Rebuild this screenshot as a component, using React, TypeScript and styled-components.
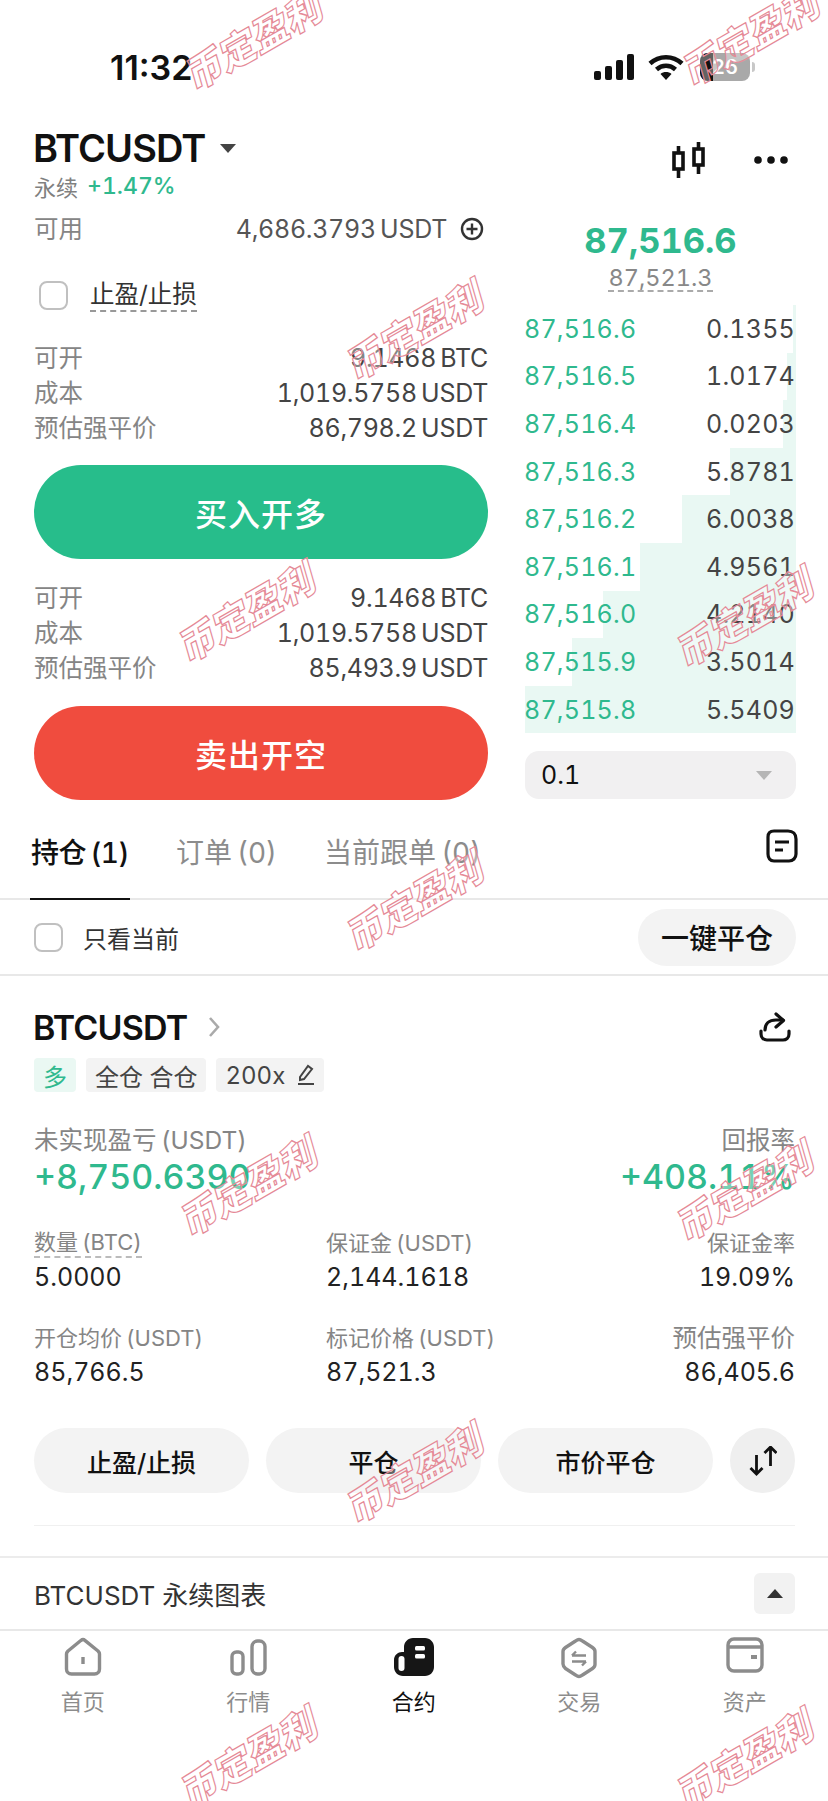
import React from 'react';
import styled, { createGlobalStyle } from 'styled-components';

const GlobalStyle = createGlobalStyle`
  html, body {
    margin: 0;
    padding: 0;
    background: #fff;
  }
  * {
    box-sizing: border-box;
  }
`;

const FONT = `Inter, "Noto Sans CJK SC", sans-serif`;
const GREEN = '#2fb98e';
const THIN = '\u2009';

const bookRows = [
  { price: '87,516.6', size: '0.1355', depth: 3 },
  { price: '87,516.5', size: '1.0174', depth: 9 },
  { price: '87,516.4', size: '0.0203', depth: 13 },
  { price: '87,516.3', size: '5.8781', depth: 66 },
  { price: '87,516.2', size: '6.0038', depth: 114 },
  { price: '87,516.1', size: '4.9561', depth: 156 },
  { price: '87,516.0', size: '4.2140', depth: 193 },
  { price: '87,515.9', size: '3.5014', depth: 224 },
  { price: '87,515.8', size: '5.5409', depth: 271 },
];

const marks = [
  [255, 40], [752, 36], [416, 330], [248, 612], [746, 617],
  [416, 901], [250, 1186], [746, 1191], [416, 1473], [250, 1757], [746, 1759],
];

const App = () => (
  <Page>
    <GlobalStyle />
    <StatusBar>
      <Clock>11:32</Clock>
      <StatusIcons>
        <svg width="40" height="26" viewBox="0 0 40 26" fill="#111">
          <rect x="0" y="17" width="7" height="9" rx="2" />
          <rect x="11" y="12" width="7" height="14" rx="2" />
          <rect x="22" y="6" width="7" height="20" rx="2" />
          <rect x="33" y="0" width="7" height="26" rx="2" />
        </svg>
        <svg width="36" height="26" viewBox="0 0 36 26" fill="none" stroke="#111" strokeWidth="4.5">
          <path d="M2 9.500C11 1 25 1 34 9.500" />
          <path d="M8.500 15.500C14 10.500 22 10.500 27.500 15.500" />
          <path d="M18 26l-5.500-6c3-2.600 8-2.600 11 0z" fill="#111" stroke="none" />
        </svg>
        <Battery>
          <BatteryLevel />
          <BatteryText>26</BatteryText>
        </Battery>
      </StatusIcons>
    </StatusBar>

    <TradeGrid>
      <LeftCol>
        <TitleRow>
          <Symbol>BTCUSDT</Symbol>
          <CaretDown />
        </TitleRow>
        <SubRow>
          <span>永续</span>
          <Change>+1.47%</Change>
        </SubRow>
        <AvailRow>
          <Muted>可用</Muted>
          <AvailValue>
            <span>4,686.3793{THIN}USDT</span>
            <svg width="24" height="24" viewBox="0 0 24 24" fill="none" stroke="#333" strokeWidth="2.400">
              <circle cx="12" cy="12" r="10" />
              <path d="M12 6.500v11M6.500 12h11" />
            </svg>
          </AvailValue>
        </AvailRow>
        <StopRow>
          <CheckBox />
          <StopLabel>止盈/止损</StopLabel>
        </StopRow>
        <InfoGroup $gap={25}>
          <InfoRow><Muted>可开</Muted><InfoValue>9.1468{THIN}BTC</InfoValue></InfoRow>
          <InfoRow><Muted>成本</Muted><InfoValue>1,019.5758{THIN}USDT</InfoValue></InfoRow>
          <InfoRow><Muted>预估强平价</Muted><InfoValue>86,798.2{THIN}USDT</InfoValue></InfoRow>
        </InfoGroup>
        <ActionButton $bg="#27bd8b">买入开多</ActionButton>
        <InfoGroup $gap={21}>
          <InfoRow><Muted>可开</Muted><InfoValue>9.1468{THIN}BTC</InfoValue></InfoRow>
          <InfoRow><Muted>成本</Muted><InfoValue>1,019.5758{THIN}USDT</InfoValue></InfoRow>
          <InfoRow><Muted>预估强平价</Muted><InfoValue>85,493.9{THIN}USDT</InfoValue></InfoRow>
        </InfoGroup>
        <ActionButton $bg="#f04c3e" $gap={21}>卖出开空</ActionButton>
      </LeftCol>

      <RightCol>
        <HeaderIcons>
          <svg width="34" height="36" viewBox="0 0 34 36" fill="none" stroke="#111" strokeWidth="3.600">
            <rect x="2" y="11" width="9" height="16" />
            <path d="M6.500 4v7M6.500 27v9" />
            <rect x="22" y="7" width="9" height="16" />
            <path d="M26.500 0v7M26.500 23v9" />
          </svg>
          <svg width="34" height="8" viewBox="0 0 34 8" fill="#111">
            <circle cx="4" cy="4" r="3.800" />
            <circle cx="17" cy="4" r="3.800" />
            <circle cx="30" cy="4" r="3.800" />
          </svg>
        </HeaderIcons>
        <LastPrice>87,516.6</LastPrice>
        <MarkWrap><MarkPrice>87,521.3</MarkPrice></MarkWrap>
        <Book>
          {bookRows.map((row) => (
            <BookRow key={row.price}>
              <DepthBar style={{ width: row.depth }} />
              <BookPrice>{row.price}</BookPrice>
              <BookSize>{row.size}</BookSize>
            </BookRow>
          ))}
        </Book>
        <StepSelect>
          0.1
          <SelectCaret />
        </StepSelect>
      </RightCol>
    </TradeGrid>

    <Tabs>
      <Tab $active>持仓{THIN}(1)</Tab>
      <Tab>订单{THIN}(0)</Tab>
      <Tab>当前跟单{THIN}(0)</Tab>
      <NoteIcon>
        <svg width="32" height="34" viewBox="0 0 32 34" fill="none" stroke="#111" strokeWidth="3.200">
          <path d="M8 2h14c5 0 8 3 8 8v15c0 4-3 7-7 7H8c-4 0-6-3-6-7V8c0-4 2-6 6-6z" />
          <path d="M9 13h14M9 21h8" />
        </svg>
      </NoteIcon>
    </Tabs>

    <FilterRow>
      <FilterLabel>
        <CheckBox />
        只看当前
      </FilterLabel>
      <CloseAll>一键平仓</CloseAll>
    </FilterRow>

    <PositionCard>
      <PositionHead>
        <PositionName>
          BTCUSDT
          <svg width="12" height="22" viewBox="0 0 12 22" fill="none" stroke="#aaa" strokeWidth="2.600">
            <path d="M2 2l8 9-8 9" />
          </svg>
        </PositionName>
        <svg width="32" height="30" viewBox="0 0 32 30" fill="none" stroke="#111" strokeWidth="3.200" strokeLinecap="round" strokeLinejoin="round">
          <path d="M2 19v3c0 4 3 6 6 6h16c3 0 6-2 6-6v-3" />
          <path d="M6 18c0-6 4-10 11-10h7" />
          <path d="M17 2l7.500 6.500L17 15" />
        </svg>
      </PositionHead>
      <Chips>
        <Chip $long>多</Chip>
        <Chip>全仓 合仓</Chip>
        <Chip>
          200x
          <svg width="18" height="22" viewBox="0 0 18 22" fill="none" stroke="#444" strokeWidth="2">
            <path d="M3 13L11 2l4 3-8 10-4 1z" />
            <path d="M1 20h16" />
          </svg>
        </Chip>
      </Chips>
      <PnlRow>
        <PnlCell>
          <Muted>未实现盈亏{THIN}(USDT)</Muted>
          <PnlValue>+8,750.6390</PnlValue>
        </PnlCell>
        <PnlCell $right>
          <Muted>回报率</Muted>
          <PnlValue>+408.11%</PnlValue>
        </PnlCell>
      </PnlRow>
      <StatGrid>
        <Stat><StatLabel $dashed>数量{THIN}(BTC)</StatLabel><StatValue>5.0000</StatValue></Stat>
        <Stat><StatLabel>保证金{THIN}(USDT)</StatLabel><StatValue>2,144.1618</StatValue></Stat>
        <Stat $right><StatLabel>保证金率</StatLabel><StatValue>19.09%</StatValue></Stat>
        <Stat><StatLabel>开仓均价{THIN}(USDT)</StatLabel><StatValue>85,766.5</StatValue></Stat>
        <Stat><StatLabel>标记价格{THIN}(USDT)</StatLabel><StatValue>87,521.3</StatValue></Stat>
        <Stat $right><StatLabel $large>预估强平价</StatLabel><StatValue>86,405.6</StatValue></Stat>
      </StatGrid>
      <PositionActions>
        <PillButton>止盈/止损</PillButton>
        <PillButton>平仓</PillButton>
        <PillButton>市价平仓</PillButton>
        <RoundButton>
          <svg width="28" height="30" viewBox="0 0 28 30" fill="none" stroke="#111" strokeWidth="2.800">
            <path d="M7.500 9v19M1.500 22l6 6 6-6" />
            <path d="M21.500 20V1M15.500 7l6-6 6 6" />
          </svg>
        </RoundButton>
      </PositionActions>
      <CardRule />
    </PositionCard>

    <ChartRow>
      <ChartTitle>BTCUSDT 永续图表</ChartTitle>
      <ChartToggle><CaretUp /></ChartToggle>
    </ChartRow>

    <BottomNav>
      <NavItem>
        <svg width="38" height="40" viewBox="0 0 38 40" fill="none" stroke="#8c8c8c" strokeWidth="3.400" strokeLinejoin="round">
          <path d="M19 2.500c1 0 1.500.5 2.500 1.300L34 14c1 1 1.500 1.800 1.500 3v15c0 3-2 5-5 5h-23c-3 0-5-2-5-5V17c0-1.200.5-2 1.500-3L16.500 3.800c1-.8 1.500-1.300 2.500-1.300z" />
          <path d="M19 20v7" />
        </svg>
        <NavLabel>首页</NavLabel>
      </NavItem>
      <NavItem>
        <svg width="38" height="40" viewBox="0 0 38 40" fill="none" stroke="#8c8c8c" strokeWidth="3.400">
          <rect x="3" y="15" width="11" height="22" rx="4.500" />
          <rect x="23" y="4" width="13" height="33" rx="5.500" />
        </svg>
        <NavLabel>行情</NavLabel>
      </NavItem>
      <NavItem>
        <svg width="40" height="40" viewBox="0 0 40 40" fill="#161616">
          <path d="M10 10c0-5 4-9 9-9h12c5 0 9 4 9 9v20c0 5-4 9-9 9H9c-5 0-9-4-9-9V23c0-5 4-8 8-8h2z" />
          <rect x="21" y="9" width="10" height="4.500" rx="1.500" fill="#fff" />
          <rect x="21" y="17" width="10" height="4.500" rx="1.500" fill="#fff" />
          <rect x="4.500" y="19" width="6" height="15" rx="3" fill="#fff" />
        </svg>
        <NavLabel $active>合约</NavLabel>
      </NavItem>
      <NavItem>
        <svg width="38" height="42" viewBox="0 0 38 42" fill="none" stroke="#8c8c8c" strokeWidth="3.400" strokeLinejoin="round">
          <path d="M19 2.500c1.500 0 2.500.8 3.500 1.500l10 6.500c1.500 1 2.500 2.200 2.500 4v13c0 1.800-1 3-2.500 4l-10 6.500c-1 .7-2 1.500-3.500 1.500s-2.500-.8-3.500-1.500l-10-6.500C4 30 3 28.800 3 27V14.500c0-1.800 1-3 2.500-4l10-6.500c1-.7 2-1.500 3.500-1.500z" />
          <path d="M12 18.500h14M12 18.500l4-4M26 24.500H12M26 24.500l-4 4" strokeWidth="2.400" />
        </svg>
        <NavLabel>交易</NavLabel>
      </NavItem>
      <NavItem>
        <svg width="38" height="36" viewBox="0 0 38 36" fill="none" stroke="#8c8c8c" strokeWidth="3.400">
          <rect x="2" y="2" width="34" height="32" rx="6" />
          <path d="M2 10h34" />
          <rect x="25" y="18" width="6" height="4" fill="#8c8c8c" stroke="none" />
        </svg>
        <NavLabel>资产</NavLabel>
      </NavItem>
    </BottomNav>

    {marks.map(([x, y]) => (
      <Watermark key={`${x}-${y}`} style={{ left: x, top: y }}>币定盈利</Watermark>
    ))}
  </Page>
);

export default App;

const Page = styled.div`
  position: relative;
  width: 828px;
  height: 1801px;
  overflow: hidden;
  background: #fff;
  font-family: ${FONT};
  font-variant-numeric: tabular-nums;
  color: #111;
`;

const Watermark = styled.div`
  position: absolute;
  transform: translate(-50%, -50%) rotate(-30deg) skewX(-14deg);
  font-size: 38px;
  font-weight: 900;
  line-height: 1;
  white-space: nowrap;
  color: rgba(255, 255, 255, 0.35);
  -webkit-text-stroke: 1.2px #e58a97;
  pointer-events: none;
`;

const StatusBar = styled.div`
  height: 120px;
  padding: 53px 78px 0 110px;
  display: flex;
  justify-content: space-between;
  align-items: flex-start;
`;

const Clock = styled.div`
  font-size: 34px;
  line-height: 30px;
  font-weight: 600;
  font-variant-numeric: normal;
`;

const StatusIcons = styled.div`
  display: flex;
  align-items: center;
  gap: 14px;
  height: 28px;
`;

const Battery = styled.div`
  position: relative;
  width: 50px;
  height: 28px;
  margin-left: 2px;
  border-radius: 8px;
  background: #a9a9a9;
  &::after {
    content: '';
    position: absolute;
    right: -5px;
    top: 9px;
    width: 3px;
    height: 10px;
    border-radius: 0 3px 3px 0;
    background: #c8c8c8;
  }
`;

const BatteryLevel = styled.div`
  width: 13px;
  height: 100%;
  border-radius: 8px 0 0 8px;
  background: #111;
`;

const BatteryText = styled.span`
  position: absolute;
  left: 12px;
  top: 2px;
  font-size: 20px;
  line-height: 24px;
  font-weight: 600;
  color: #fff;
`;

const TradeGrid = styled.div`
  display: grid;
  grid-template-columns: 454px 271px;
  column-gap: 37px;
  padding-left: 34px;
  height: 680px;
`;

const LeftCol = styled.div`
  display: flex;
  flex-direction: column;
`;

const RightCol = styled.div`
  display: flex;
  flex-direction: column;
`;

const TitleRow = styled.div`
  height: 56px;
  display: flex;
  align-items: center;
  gap: 14px;
`;

const Symbol = styled.div`
  margin-left: -1px;
  font-size: 38px;
  font-weight: 600;
  letter-spacing: -0.9px;
  font-variant-numeric: normal;
`;

const CaretDown = styled.span`
  width: 0;
  height: 0;
  border-left: 8px solid transparent;
  border-right: 8px solid transparent;
  border-top: 9px solid #444;
`;

const SubRow = styled.div`
  height: 20px;
  display: flex;
  align-items: center;
  gap: 9px;
  font-size: 22px;
  color: #808080;
`;

const Change = styled.span`
  font-size: 23px;
  font-weight: 500;
  color: ${GREEN};
`;

const Muted = styled.span`
  font-size: 24.5px;
  line-height: 30px;
  color: #858585;
`;

const AvailRow = styled.div`
  margin-top: 16px;
  height: 34px;
  display: flex;
  justify-content: space-between;
  align-items: center;
  padding-right: 4px;
`;

const AvailValue = styled.span`
  display: flex;
  align-items: center;
  gap: 13px;
  font-size: 25px;
  letter-spacing: -0.3px;
  color: #555;
`;

const StopRow = styled.div`
  margin-top: 29px;
  height: 40px;
  display: flex;
  align-items: center;
  gap: 22px;
`;

const CheckBox = styled.span`
  display: inline-block;
  width: 29px;
  height: 29px;
  margin-left: 5px;
  border: 2px solid #c0c0c0;
  border-radius: 8px;
  flex: none;
`;

const StopLabel = styled.span`
  font-size: 24.5px;
  line-height: 32px;
  color: #333;
  border-bottom: 2px dashed #999;
`;

const InfoGroup = styled.div<{ $gap: number }>`
  margin-top: ${(p) => p.$gap}px;
  display: flex;
  flex-direction: column;
`;

const InfoRow = styled.div`
  height: 35px;
  display: flex;
  justify-content: space-between;
  align-items: center;
`;

const InfoValue = styled.span`
  font-size: 25px;
  letter-spacing: -0.3px;
  color: #444;
`;

const ActionButton = styled.button<{ $bg: string; $gap?: number }>`
  margin-top: ${(p) => p.$gap ?? 20}px;
  height: 94px;
  width: 100%;
  flex: none;
  border: 0;
  border-radius: 47px;
  background: ${(p) => p.$bg};
  color: #fff;
  font-family: ${FONT};
  font-size: 32px;
  font-weight: 500;
  letter-spacing: 1px;
`;

const HeaderIcons = styled.div`
  height: 80px;
  padding-right: 8px;
  padding-left: 147px;
  display: flex;
  align-items: center;
  justify-content: space-between;
`;

const LastPrice = styled.div`
  margin-top: 23px;
  height: 36px;
  line-height: 36px;
  text-align: center;
  font-size: 34.5px;
  font-weight: 700;
  color: ${GREEN};
`;

const MarkWrap = styled.div`
  height: 46px;
  text-align: center;
`;

const MarkPrice = styled.span`
  display: inline-block;
  height: 33px;
  padding-top: 4px;
  line-height: 30px;
  font-size: 23.5px;
  color: #888;
  border-bottom: 2px dashed #aaa;
`;

const Book = styled.div`
  display: flex;
  flex-direction: column;
`;

const BookRow = styled.div`
  position: relative;
  height: 47.6px;
  display: flex;
  justify-content: space-between;
  align-items: center;
  font-size: 25px;
  letter-spacing: 0.2px;
`;

const DepthBar = styled.div`
  position: absolute;
  right: 0;
  top: 0;
  bottom: 0;
  background: #e9f8f3;
`;

const BookPrice = styled.span`
  position: relative;
  margin-left: -1px;
  color: ${GREEN};
`;

const BookSize = styled.span`
  position: relative;
  margin-right: 1px;
  color: #444;
`;

const StepSelect = styled.div`
  margin-top: 18px;
  height: 48px;
  padding: 0 24px 0 16px;
  border-radius: 14px;
  background: #f1f0f1;
  display: flex;
  justify-content: space-between;
  align-items: center;
  font-size: 25px;
`;

const SelectCaret = styled.span`
  width: 0;
  height: 0;
  border-left: 8px solid transparent;
  border-right: 8px solid transparent;
  border-top: 9px solid #b5b5b5;
`;

const Tabs = styled.div`
  height: 100px;
  padding: 0 30px;
  display: flex;
  gap: 45px;
  border-bottom: 2px solid #e8e8e8;
`;

const Tab = styled.div<{ $active?: boolean }>`
  position: relative;
  height: 100px;
  padding: 33px 1px 0;
  font-size: 28px;
  line-height: 40px;
  white-space: nowrap;
  letter-spacing: ${(p) => (p.$active ? '-0.5px' : '0')};
  color: ${(p) => (p.$active ? '#111' : '#8c8c8c')};
  font-weight: ${(p) => (p.$active ? 500 : 400)};
  &::after {
    content: '';
    display: ${(p) => (p.$active ? 'block' : 'none')};
    position: absolute;
    left: 0;
    right: 0;
    bottom: 0;
    height: 2px;
    background: #111;
  }
`;

const NoteIcon = styled.div`
  margin-left: auto;
  padding-top: 29px;
`;

const FilterRow = styled.div`
  height: 76px;
  padding: 0 32px 0 29px;
  display: flex;
  justify-content: space-between;
  align-items: center;
  border-bottom: 2px solid #e8e8e8;
`;

const FilterLabel = styled.div`
  display: flex;
  align-items: center;
  gap: 20px;
  font-size: 24px;
  color: #333;
`;

const CloseAll = styled.button`
  width: 158px;
  height: 57px;
  border: 0;
  border-radius: 29px;
  background: #f3f3f3;
  color: #111;
  font-family: ${FONT};
  font-size: 28px;
  font-weight: 500;
`;

const PositionCard = styled.div`
  padding: 26px 33px 0 34px;
  height: 580px;
`;

const PositionHead = styled.div`
  height: 50px;
  padding-right: 4px;
  display: flex;
  justify-content: space-between;
  align-items: center;
`;

const PositionName = styled.div`
  margin-left: -1px;
  display: flex;
  align-items: center;
  gap: 21px;
  font-size: 34px;
  font-weight: 600;
  letter-spacing: -0.8px;
  font-variant-numeric: normal;
`;

const Chips = styled.div`
  margin-top: 6px;
  display: flex;
  gap: 10px;
`;

const Chip = styled.span<{ $long?: boolean }>`
  height: 34px;
  padding: 0 9px;
  border-radius: 4px;
  display: flex;
  align-items: center;
  gap: 12px;
  font-size: 24px;
  background: ${(p) => (p.$long ? '#eaf8f3' : '#f3f3f3')};
  color: ${(p) => (p.$long ? GREEN : '#444')};
`;

const PnlRow = styled.div`
  margin-top: 33px;
  display: flex;
  justify-content: space-between;
`;

const PnlCell = styled.div<{ $right?: boolean }>`
  display: flex;
  flex-direction: column;
  align-items: ${(p) => (p.$right ? 'flex-end' : 'flex-start')};
`;

const PnlValue = styled.div`
  height: 44px;
  line-height: 44px;
  font-size: 34px;
  font-weight: 500;
  color: ${GREEN};
`;

const StatGrid = styled.div`
  margin-top: 29px;
  display: grid;
  grid-template-columns: 292px 1fr auto;
  row-gap: 31px;
`;

const Stat = styled.div<{ $right?: boolean }>`
  display: flex;
  flex-direction: column;
  align-items: ${(p) => (p.$right ? 'flex-end' : 'flex-start')};
  gap: 4px;
`;

const StatLabel = styled.span<{ $dashed?: boolean; $large?: boolean }>`
  font-size: ${(p) => (p.$large ? 24.5 : 22)}px;
  line-height: 30px;
  color: #858585;
  ${(p) => (p.$dashed ? 'border-bottom: 2px dashed #bbb; line-height: 28px;' : '')}
`;

const StatValue = styled.span`
  font-size: 25px;
  line-height: 30px;
  color: #222;
`;

const PositionActions = styled.div`
  margin-top: 41px;
  display: flex;
  gap: 17px;
`;

const PillButton = styled.button`
  flex: 1;
  height: 65px;
  border: 0;
  border-radius: 33px;
  background: #f3f3f3;
  color: #111;
  font-family: ${FONT};
  font-size: 25px;
  font-weight: 500;
`;

const RoundButton = styled.button`
  flex: none;
  width: 65px;
  height: 65px;
  padding: 0;
  border: 0;
  border-radius: 50%;
  background: #efefef;
  display: flex;
  align-items: center;
  justify-content: center;
`;

const CardRule = styled.div`
  margin-top: 32px;
  height: 1px;
  background: #f0f0f0;
`;

const ChartRow = styled.div`
  height: 75px;
  padding: 0 33px 0 34px;
  display: flex;
  justify-content: space-between;
  align-items: center;
  border-top: 2px solid #ececec;
  border-bottom: 2px solid #e8e8e8;
`;

const ChartTitle = styled.div`
  font-size: 26px;
  color: #333;
`;

const ChartToggle = styled.div`
  width: 41px;
  height: 41px;
  border-radius: 6px;
  background: #f2f2f2;
  display: flex;
  align-items: center;
  justify-content: center;
`;

const CaretUp = styled.span`
  width: 0;
  height: 0;
  border-left: 8px solid transparent;
  border-right: 8px solid transparent;
  border-bottom: 9px solid #333;
`;

const BottomNav = styled.div`
  display: grid;
  grid-template-columns: repeat(5, 165.5px);
  padding-top: 6px;
`;

const NavItem = styled.div`
  height: 78px;
  display: flex;
  flex-direction: column;
  align-items: center;
  justify-content: space-between;
`;

const NavLabel = styled.span<{ $active?: boolean }>`
  font-size: 22px;
  line-height: 26px;
  color: ${(p) => (p.$active ? '#111' : '#8c8c8c')};
`;
